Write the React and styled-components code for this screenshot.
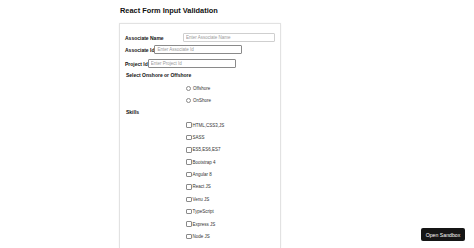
import styled, { createGlobalStyle } from "styled-components";

const GlobalStyle = createGlobalStyle`
  body {
    margin: 0;
    background: #fff;
    font-family: "Liberation Sans", Arial, sans-serif;
    overflow: hidden;
  }
`;

const Page = styled.div`
  width: 162px;
  height: 248px;
  margin-left: 119px;
  padding-top: 6px;
  box-sizing: border-box;
  display: flex;
  flex-direction: column;
`;

const Title = styled.h1`
  margin: 0 0 7px 1px;
  font-size: 7.4px;
  line-height: 10px;
  font-weight: 700;
  color: #111;
`;

const Card = styled.form`
  flex: 1;
  min-height: 0;
  display: flex;
  flex-direction: column;
  padding: 9px 5px 0;
  border: 1px solid #e2e2e2;
  border-bottom: none;
  box-shadow: 0 0 2px rgba(0, 0, 0, 0.05);
`;

const Row = styled.div`
  display: flex;
  align-items: center;
  justify-content: ${(p) => (p.$spread ? "space-between" : "flex-start")};
  height: 9px;
  margin-top: ${(p) => p.$top || 0}px;
`;

const Label = styled.label`
  font-size: 5px;
  font-weight: 700;
  color: #111;
  white-space: nowrap;
`;

const Input = styled.input`
  box-sizing: border-box;
  width: ${(p) => p.$w}px;
  height: 9px;
  margin: 0;
  padding: 0 2px;
  border: 1px solid ${(p) => (p.$light ? "#cfcfcf" : "#8a8a8a")};
  border-radius: 1px;
  font-family: inherit;
  font-size: 4.5px;
  color: #222;
  &::placeholder {
    color: #9a9a9a;
  }
`;

const SectionTitle = styled.div`
  height: 8px;
  line-height: 8px;
  margin-top: ${(p) => p.$top}px;
  padding-left: 1px;
  font-size: 5px;
  font-weight: 700;
  color: #111;
`;

const Options = styled.div`
  display: flex;
  flex-direction: column;
  gap: ${(p) => p.$gap}px;
  margin-top: 5px;
  padding-left: 61px;
`;

const Option = styled.label`
  display: flex;
  align-items: center;
  height: 8px;
  font-size: 4.5px;
  color: #333;
`;

const Box = styled.input`
  appearance: none;
  box-sizing: border-box;
  flex: none;
  width: ${(p) => p.$size}px;
  height: ${(p) => p.$size}px;
  margin: 0 ${(p) => (p.type === "radio" ? 2 : 1)}px 0 0;
  border: 0.6px solid #8a8a8a;
  border-radius: ${(p) => (p.type === "radio" ? "50%" : "1px")};
  background: #fff;
`;

const SandboxButton = styled.button`
  position: fixed;
  right: 9px;
  bottom: 7px;
  width: 44px;
  height: 13px;
  padding: 0;
  border: none;
  border-radius: 2px;
  background: #151515;
  color: #fff;
  font-family: inherit;
  font-size: 5.2px;
`;

const locations = ["Offshore", "OnShore"];

const skills = [
  "HTML,CSS3,JS",
  "SASS",
  "ES5,ES6,ES7",
  "Bootstrap 4",
  "Angular 8",
  "React JS",
  "Venu JS",
  "TypeScript",
  "Express JS",
  "Node JS",
];

function App() {
  return (
    <>
      <GlobalStyle />
      <Page>
        <Title>React Form Input Validation</Title>
        <Card>
          <Row $spread>
            <Label>Associate Name</Label>
            <Input $w={92} $light placeholder="Enter Associate Name" />
          </Row>
          <Row $top={3}>
            <Label>Associate Id</Label>
            <Input $w={88} placeholder="Enter Associate Id" />
          </Row>
          <Row $top={5}>
            <Label>Project Id</Label>
            <Input $w={88} placeholder="Enter Project Id" />
          </Row>

          <SectionTitle $top={3}>Select Onshore or Offshore</SectionTitle>
          <Options $gap={4}>
            {locations.map((loc) => (
              <Option key={loc}>
                <Box type="radio" name="location" $size={5} />
                {loc}
              </Option>
            ))}
          </Options>

          <SectionTitle $top={4}>Skills</SectionTitle>
          <Options $gap={4.4}>
            {skills.map((skill) => (
              <Option key={skill}>
                <Box type="checkbox" $size={5.5} />
                {skill}
              </Option>
            ))}
          </Options>
        </Card>
      </Page>
      <SandboxButton>Open Sandbox</SandboxButton>
    </>
  );
}

export default App;
